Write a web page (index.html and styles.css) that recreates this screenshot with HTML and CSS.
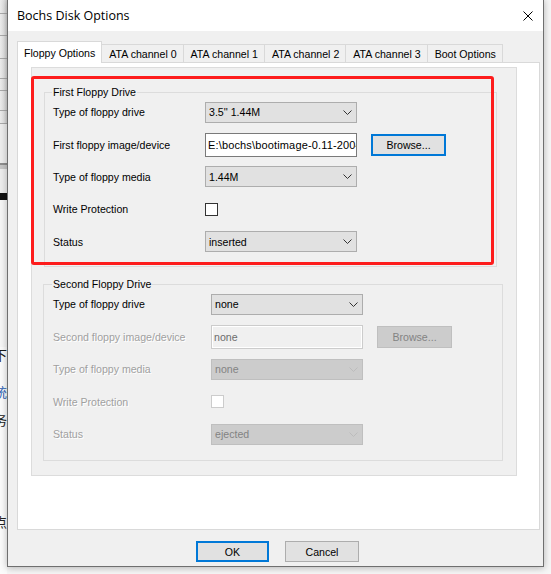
FILE: index.html
```html
<!DOCTYPE html>
<html lang="en">
<head>
<meta charset="utf-8">
<title>Bochs Disk Options</title>
<link rel="stylesheet" href="styles.css">
</head>
<body>
<div class="strip">
  <div class="srow h13"></div>
  <div class="srow h21"></div>
  <div class="srow h22"></div>
  <div class="srow h19"></div>
  <div class="srow h11"></div>
  <div class="srow h19"></div>
  <div class="srow h12"></div>
  <div class="sgap h39"></div>
  <div class="sband"></div>
  <div class="sgap h24"></div>
  <div class="sblack"></div>
  <div class="swhite">
    <div class="cj cj1">下</div>
    <div class="cj cj2">统</div>
    <div class="cj cj3">务</div>
    <div class="cj cj4">点</div>
  </div>
  <div class="sfoot"></div>
</div>

<div class="dialog">
  <div class="titlebar">
    <span class="title">Bochs Disk Options</span>
    <svg class="close" width="10" height="10" viewBox="0 0 10 10"><path d="M0.5 0.5L9.5 9.5M9.5 0.5L0.5 9.5" stroke="#000" stroke-width="1" fill="none"/></svg>
  </div>
  <div class="client">
    <div class="tabs">
      <div class="tab active">Floppy Options</div>
      <div class="tab">ATA channel 0</div>
      <div class="tab">ATA channel 1</div>
      <div class="tab">ATA channel 2</div>
      <div class="tab">ATA channel 3</div>
      <div class="tab">Boot Options</div>
    </div>
    <div class="panel">
      <div class="page">
        <div class="annot"></div>
        <fieldset class="group g1">
          <legend>First Floppy Drive</legend>
          <div class="row">
            <div class="lbl">Type of floppy drive</div>
            <div class="combo"><span>3.5'' 1.44M</span><svg class="chev" width="9" height="5" viewBox="0 0 9 5"><path d="M0.5 0.5L4.5 4.5L8.5 0.5" stroke="#333" fill="none"/></svg></div>
          </div>
          <div class="row">
            <div class="lbl">First floppy image/device</div>
            <div class="field path">E:\bochs\bootimage-0.11-2004</div>
            <div class="browse">Browse...</div>
          </div>
          <div class="row">
            <div class="lbl">Type of floppy media</div>
            <div class="combo"><span>1.44M</span><svg class="chev" width="9" height="5" viewBox="0 0 9 5"><path d="M0.5 0.5L4.5 4.5L8.5 0.5" stroke="#333" fill="none"/></svg></div>
          </div>
          <div class="row">
            <div class="lbl">Write Protection</div>
            <div class="check"></div>
          </div>
          <div class="row">
            <div class="lbl">Status</div>
            <div class="combo"><span>inserted</span><svg class="chev" width="9" height="5" viewBox="0 0 9 5"><path d="M0.5 0.5L4.5 4.5L8.5 0.5" stroke="#333" fill="none"/></svg></div>
          </div>
        </fieldset>
        <fieldset class="group g2">
          <legend>Second Floppy Drive</legend>
          <div class="row">
            <div class="lbl">Type of floppy drive</div>
            <div class="combo"><span>none</span><svg class="chev" width="9" height="5" viewBox="0 0 9 5"><path d="M0.5 0.5L4.5 4.5L8.5 0.5" stroke="#333" fill="none"/></svg></div>
          </div>
          <div class="row">
            <div class="lbl off">Second floppy image/device</div>
            <div class="field off">none</div>
            <div class="browse off">Browse...</div>
          </div>
          <div class="row">
            <div class="lbl off">Type of floppy media</div>
            <div class="combo off"><span>none</span><svg class="chev" width="9" height="5" viewBox="0 0 9 5"><path d="M0.5 0.5L4.5 4.5L8.5 0.5" stroke="#bcbcbc" fill="none"/></svg></div>
          </div>
          <div class="row">
            <div class="lbl off">Write Protection</div>
            <div class="check off"></div>
          </div>
          <div class="row">
            <div class="lbl off">Status</div>
            <div class="combo off"><span>ejected</span><svg class="chev" width="9" height="5" viewBox="0 0 9 5"><path d="M0.5 0.5L4.5 4.5L8.5 0.5" stroke="#bcbcbc" fill="none"/></svg></div>
          </div>
        </fieldset>
      </div>
    </div>
    <div class="buttons">
      <div class="btn default">OK</div>
      <div class="btn cancel">Cancel</div>
    </div>
  </div>
</div>
</body>
</html>
```
FILE: styles.css
```css
html {
  margin: 0;
  padding: 0;
  overflow: hidden;
}
body {
  margin: 0;
  padding: 0;
  width: 551px;
  height: 574px;
  position: relative;
  overflow: hidden;
  background: #f6f6f6;
  font-family: "Liberation Sans", Arial, sans-serif;
  font-size: 10.6px;
  color: #000;
}

/* desktop strip left of the dialog */
.strip {
  width: 551px;
  height: 574px;
  overflow: hidden;
}
.srow {
  width: 7px;
  box-sizing: border-box;
  background: linear-gradient(to right, #ececec 0, #e2e2e2 4px, #cfcfcf 7px);
  border-bottom: 1px solid #a9a9a9;
}
.h13 { height: 14px; }
.h21 { height: 22px; }
.h22 { height: 23px; }
.h19 { height: 20px; }
.h11 { height: 12px; }
.h12 { height: 13px; }
.sgap { width: 7px; background: #ededed; }
.h39 { height: 39px; }
.h24 { height: 24px; }
.sband {
  width: 7px;
  height: 6px;
  box-sizing: border-box;
  background: #c6c6c6;
  border-top: 2px solid #8e8e8e;
}
.sblack { width: 7px; height: 7px; background: #111; }
.swhite {
  width: 7px;
  height: 349px;
  background: #fbfbfb;
}
.cj {
  font-family: "Noto Sans CJK SC", sans-serif;
  font-size: 13px;
  line-height: 15px;
  height: 15px;
  margin-left: -6px;
  white-space: nowrap;
}
.cj1 { margin-top: 147px; color: #1b1b1b; }
.cj2 { margin-top: 22px; color: #2b5fb3; }
.cj3 { margin-top: 13px; color: #222; }
.cj4 { margin-top: 87px; color: #222; }
.sfoot {
  height: 24px;
  box-sizing: border-box;
  border-top: 1px solid #cdcdcd;
  background: #f0f0f0;
}

/* dialog window */
.dialog {
  position: absolute;
  left: 7px;
  top: -1px;
  width: 537px;
  height: 568px;
  box-sizing: border-box;
  border: 1px solid #6f6f6f;
  background: #f0f0f0;
  box-shadow: 0 1px 7px rgba(0, 0, 0, 0.28);
}
.titlebar {
  height: 31px;
  background: #fff;
  display: flex;
  align-items: center;
  justify-content: space-between;
  padding: 0 10px 0 9px;
}
.title {
  font-family: "Open Sans", "Liberation Sans", sans-serif;
  font-size: 12.5px;
  color: #000;
}
.close { display: block; }

.client {
  height: 535px;
  box-sizing: border-box;
  padding-top: 10px;
  background: #f0f0f0;
}

/* tabs */
.tabs {
  display: flex;
  align-items: flex-end;
  height: 21px;
  margin-left: 9px;
}
.tab {
  box-sizing: border-box;
  height: 18px;
  padding: 0 6px 0 7px;
  border: 1px solid #d9d9d9;
  border-bottom: none;
  margin-left: -1px;
  background: #f0f0f0;
  display: flex;
  align-items: center;
  white-space: nowrap;
}
.tab.active {
  height: 22px;
  padding: 0 6px;
  margin-left: 0;
  margin-bottom: -1px;
  background: #fff;
  position: relative;
  z-index: 1;
}

.panel {
  width: 523px;
  height: 468px;
  box-sizing: border-box;
  margin-left: 9px;
  border: 1px solid #d9d9d9;
  background: #fff;
}
.page {
  position: relative;
  width: 486px;
  height: 409px;
  box-sizing: border-box;
  margin: 4px 0 0 13px;
  padding-top: 21px;
  border: 1px solid #dcdcdc;
  background: #f0f0f0;
}
.annot {
  position: absolute;
  left: -1px;
  top: 8px;
  width: 463px;
  height: 189px;
  box-sizing: border-box;
  border: 3px solid #fd1c1c;
  border-radius: 3px;
  pointer-events: none;
  z-index: 2;
}

/* group boxes */
.group {
  box-sizing: border-box;
  margin: 0;
  border: 1px solid #dcdcdc;
  min-width: 0;
}
.group legend {
  padding: 0 1px;
  margin-left: -1px;
  line-height: 7px;
  height: 7px;
  font-size: 10.6px;
  color: #000;
}
.g1 {
  width: 453px;
  margin-left: 12px;
  padding: 0 0 8px 8px;
}
.g2 {
  width: 460px;
  margin-left: 11px;
  margin-top: 14px;
  padding: 0 0 10px 9px;
}
.row {
  display: flex;
  align-items: center;
}
.g1 .row { height: 32.4px; }
.g2 .row { height: 32.5px; }
.g1 .lbl { width: 152px; }
.g2 .lbl { width: 158px; }
.lbl {
  white-space: nowrap;
  flex: none;
}
.lbl.off {
  color: #a0a0a0;
  text-shadow: 1px 1px 0 #fff;
}

.combo {
  box-sizing: border-box;
  width: 152px;
  height: 21px;
  border: 1px solid #adadad;
  background: #e1e1e1;
  display: flex;
  align-items: center;
  justify-content: space-between;
  padding: 0 4px 0 3px;
  flex: none;
}
.chev { display: block; }
.combo.off {
  background: #cccccc;
  border-color: #bfbfbf;
  color: #838383;
}

.field {
  box-sizing: border-box;
  width: 152px;
  height: 24px;
  border: 1px solid #7a7a7a;
  background: #fff;
  padding: 0 1px 0 2px;
  display: flex;
  align-items: center;
  overflow: hidden;
  white-space: nowrap;
  flex: none;
}
.field.path {
  font-size: 11px;
  letter-spacing: 0.15px;
}
.field.off {
  border-color: #cccccc;
  box-shadow: inset 0 0 0 1px #fff;
  background: #f0f0f0;
  color: #6d6d6d;
}

.browse {
  box-sizing: border-box;
  width: 75px;
  height: 22px;
  margin-left: 14px;
  border: 2px solid #0078d7;
  background: #e1e1e1;
  display: flex;
  align-items: center;
  justify-content: center;
  flex: none;
}
.browse.off {
  border: 1px solid #bfbfbf;
  background: #cccccc;
  color: #838383;
}

.check {
  box-sizing: border-box;
  width: 13px;
  height: 13px;
  border: 1px solid #333;
  background: #fff;
  flex: none;
}
.check.off {
  border-color: #cccccc;
}

/* bottom buttons */
.buttons {
  margin-top: 11px;
  display: flex;
  justify-content: center;
  gap: 16px;
  padding-left: 4px;
}
.btn {
  box-sizing: border-box;
  height: 21px;
  border: 1px solid #adadad;
  background: #e1e1e1;
  display: flex;
  align-items: center;
  justify-content: center;
}
.btn.default {
  width: 73px;
  border: 2px solid #0078d7;
}
.btn.cancel {
  width: 74px;
}
```
